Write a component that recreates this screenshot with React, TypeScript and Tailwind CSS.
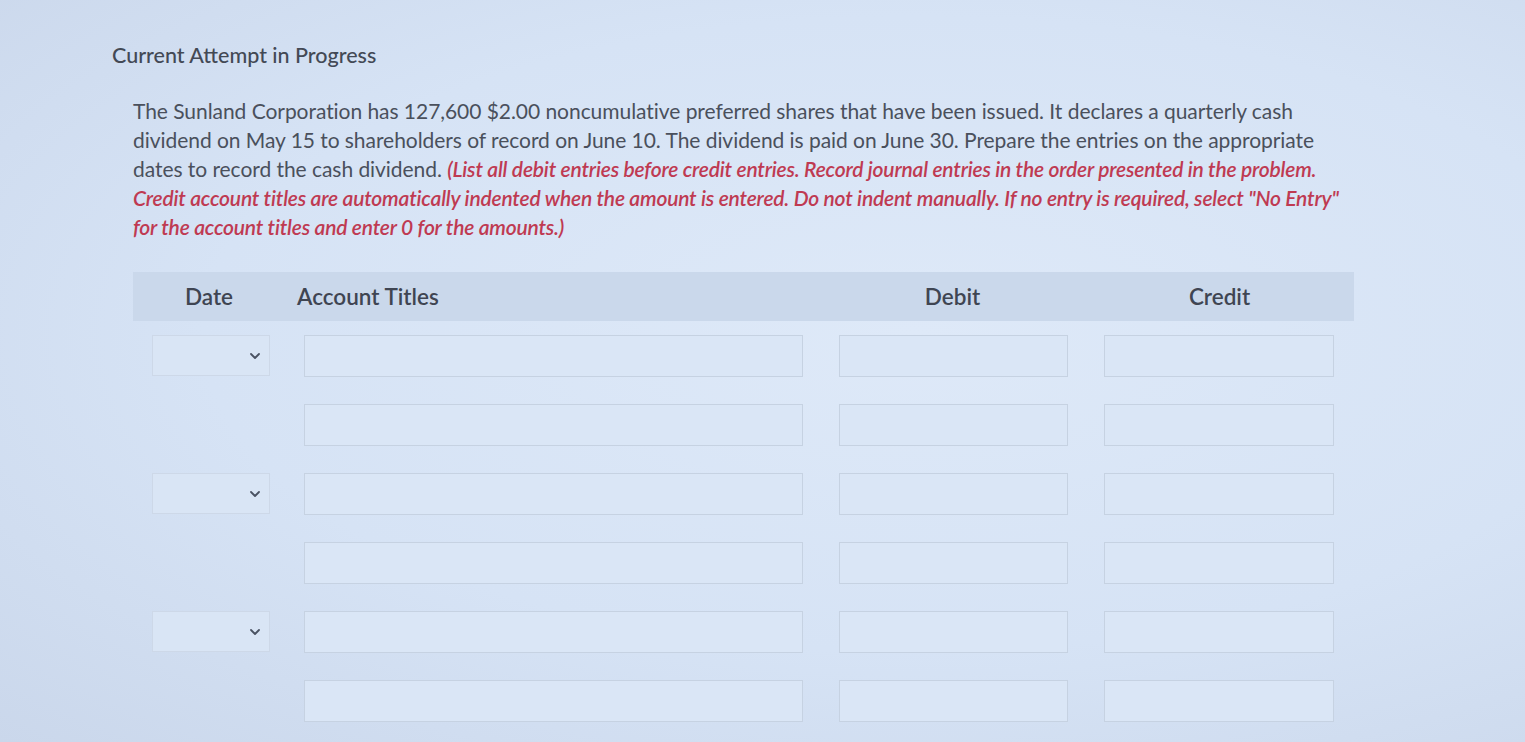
import React from "react";

const rows = [true, false, true, false, true, false];

function Chevron() {
  return (
    <svg width="12" height="8" viewBox="0 0 12 8" className="ml-auto mr-[8px]">
      <path d="M2 2 L6 6 L10 2" fill="none" stroke="#4a5262" strokeWidth="1.8" strokeLinecap="round" strokeLinejoin="round" />
    </svg>
  );
}

export default function App() {
  return (
    <div
      className="w-[1525px] h-[742px] overflow-hidden bg-[radial-gradient(ellipse_at_60%_45%,#dee9f8_0%,#d6e3f5_55%,#cad7eb_100%)] text-[#474d5a]"
      style={{ fontFamily: "Lato, 'Open Sans', sans-serif" }}
    >
      <div className="pt-[41px] pl-[112px] text-[21.5px] leading-[28px] font-medium text-[#434955]">
        Current Attempt in Progress
      </div>
      <div className="pl-[133px] pt-[27px] text-[21px] leading-[29px] tracking-[-0.05px] text-[#4a505c]">
        The Sunland Corporation has 127,600 $2.00 noncumulative preferred shares that have been issued. It declares a quarterly cash
        <br />
        dividend on May 15 to shareholders of record on June 10. The dividend is paid on June 30. Prepare the entries on the appropriate
        <br />
        dates to record the cash dividend.{" "}
        <span className="italic font-semibold tracking-[-0.2px] text-[#bf3a52]">
          (List all debit entries before credit entries. Record journal entries in the order presented in the problem.
          <br />
          Credit account titles are automatically indented when the amount is entered. Do not indent manually. If no entry is required, select "No Entry"
          <br />
          for the account titles and enter 0 for the amounts.)
        </span>
      </div>
      <div className="ml-[133px] mt-[31px] w-[1221px]">
        <div className="flex h-[49px] items-center bg-[#cad8eb] text-[22.5px] font-semibold text-[#3f4552]">
          <div className="w-[152px] text-center">Date</div>
          <div className="w-[535px] pl-[12px]">Account Titles</div>
          <div className="w-[265px] text-center">Debit</div>
          <div className="w-[269px] text-center">Credit</div>
        </div>
        <div className="flex flex-col gap-[27px] pt-[14px]">
          {rows.map((hasDate, i) => (
            <div key={i} className="flex h-[42px]">
              <div className="w-[152px] pl-[19px]">
                {hasDate && (
                  <div className="flex h-[41px] w-[118px] items-center border border-[#cdd8e8] bg-[#d9e5f5]">
                    <Chevron />
                  </div>
                )}
              </div>
              <div className="w-[535px] pl-[19px]">
                <div className="h-[42px] w-[499px] border border-[#c6d2e2] bg-[#dae6f6]" />
              </div>
              <div className="w-[265px] pl-[19px]">
                <div className="h-[42px] w-[229px] border border-[#c6d2e2] bg-[#dae6f6]" />
              </div>
              <div className="w-[269px] pl-[19px]">
                <div className="h-[42px] w-[230px] border border-[#c6d2e2] bg-[#dae6f6]" />
              </div>
            </div>
          ))}
        </div>
      </div>
    </div>
  );
}
